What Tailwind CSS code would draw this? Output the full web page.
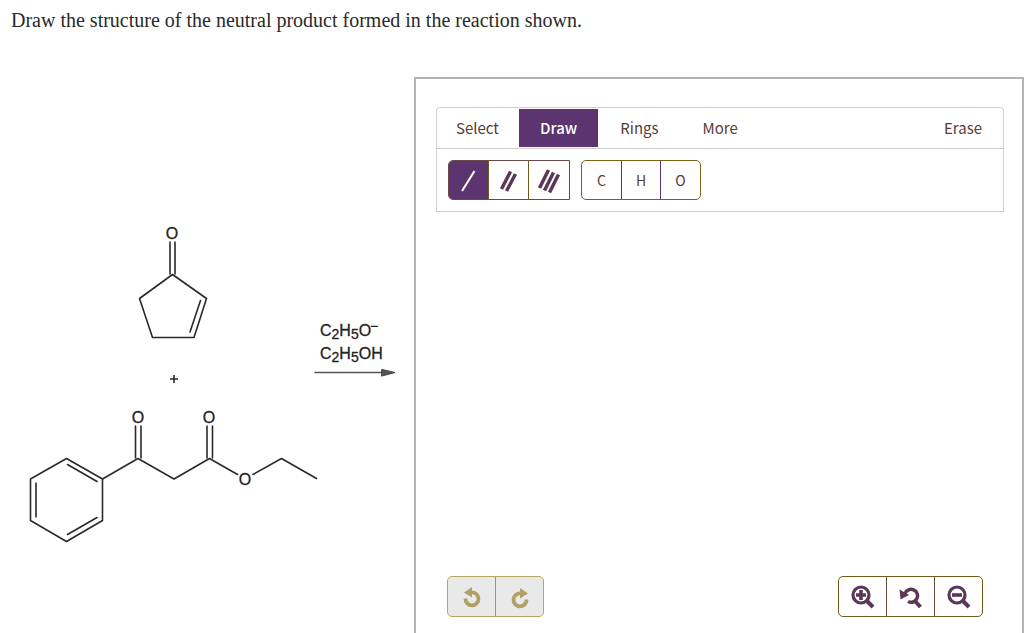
<!DOCTYPE html>
<html lang="en">
<head>
  <meta charset="UTF-8" />
  <meta name="viewport" content="width=device-width, initial-scale=1.0">
  <title>Structure drawing question</title>
  <script src="https://cdn.jsdelivr.net/npm/@tailwindcss/browser@4"></script>
</head>
<body class="flex h-screen flex-col overflow-hidden bg-white font-['Noto_Sans_CJK_SC','Noto_Sans',sans-serif]">
  <h1 class="h-[77px] shrink-0 px-[11px] pt-2 font-['Liberation_Serif',serif] text-[20px] leading-6 text-[#2a2a2a]">Draw the structure of the neutral product formed in the reaction shown.</h1>

  <main class="flex min-h-0 flex-1">
    <!-- Reaction scheme -->
    <figure class="w-[414px] shrink-0 pt-[143px]">
      <svg class="block w-full" viewBox="0 220 414 330" role="img" aria-label="Reaction scheme" fill="none" stroke="#2a2a2a" stroke-width="1.6" stroke-linejoin="round" stroke-linecap="round">
        <!-- cyclopentenone -->
        <path d="M172.500 274.500 206.500 298.500 194 337.500 152.500 337.500 139.500 298.500Z" />
        <path d="M170 242V274M175 242V274M200.500 300.500 190 332" />
        <!-- benzene ring -->
        <path d="M66.500 458.500 102.500 479V520.500L66.500 541.500 30.500 520.500V479Z" />
        <path d="M67.500 464.500 97 481.500M97 517.500 67.500 534.500M36 483V517" />
        <!-- keto ester chain -->
        <path d="M102.500 479 138 458.500 174 479 209.500 458.500 237.500 474.500M253 474.500 281.500 458.500 316.500 478.500" />
        <path d="M135.500 426V458M141 426V458M207 426V458M212.500 426V458" />
        <!-- arrow -->
        <path d="M315 372.500H382" stroke="#555" />
        <path d="M382 369.500 395 372.500 382 376Z" fill="#555" stroke="#444" stroke-width="1" />
        <path d="M170 379H178M174 375V383" stroke-linecap="butt" />
        <g fill="#222" stroke="#222" stroke-width="0.3" font-family="Liberation Sans, sans-serif" font-size="16">
          <text x="172" y="239" text-anchor="middle">O</text>
          <text x="138" y="423" text-anchor="middle">O</text>
          <text x="209" y="423" text-anchor="middle">O</text>
          <text x="245" y="485" text-anchor="middle">O</text>
          <text x="320" y="336">C<tspan font-size="14" dy="3">2</tspan><tspan dy="-3">H</tspan><tspan font-size="14" dy="3">5</tspan><tspan dy="-3">O</tspan></text>
          <text x="320" y="359">C<tspan font-size="14" dy="3">2</tspan><tspan dy="-3">H</tspan><tspan font-size="14" dy="3">5</tspan><tspan dy="-3">OH</tspan></text>
          <text x="370" y="331" font-size="14">−</text>
        </g>
      </svg>
    </figure>

    <!-- Editor -->
    <section class="flex min-w-0 flex-1 flex-col border-2 border-b-0 border-[#b3b3b3] pt-7 pr-[18px] pb-4 pl-5">
      <div class="rounded-t-sm border border-[#cfcfcf] text-[#5a3a35]">
        <nav class="flex h-[41px] items-stretch border-b border-[#cfcfcf] py-px text-[15px]">
          <button class="pr-5 pl-[19px]">Select</button>
          <button class="bg-[#5b3470] px-[21px] font-medium text-white">Draw</button>
          <button class="px-[22px]">Rings</button>
          <button class="px-[22px]">More</button>
          <button class="ml-auto px-[21px]">Erase</button>
        </nav>
        <div class="flex gap-[11px] px-[11px] py-[11px]">
          <div class="flex h-10 divide-x divide-[#6f5a20] overflow-hidden rounded-l-[5px] border border-[#6a4a45]">
            <button aria-label="Single bond" class="flex w-10 items-center justify-center bg-[#5b3470]">
              <svg class="size-6" viewBox="0 0 24 24" stroke="#fff" stroke-width="2"><path d="M5 23 17.500 3" /></svg>
            </button>
            <button aria-label="Double bond" class="flex w-10 items-center justify-center">
              <svg class="size-6" viewBox="0 0 24 24" stroke="#5b3858" stroke-width="3.500"><path d="M4.500 21 13.500 3.500M9.500 23 18.500 6" /></svg>
            </button>
            <button aria-label="Triple bond" class="flex w-10 items-center justify-center">
              <svg class="size-6 overflow-visible" viewBox="0 0 24 24" stroke="#5b3858" stroke-width="3.500"><path d="M2.500 20 11.500 2M7.500 22.500 16.500 4.500M12.500 24.500 21.500 6.500" /></svg>
            </button>
          </div>
          <div class="flex h-10 divide-x divide-[#5b3470] rounded-[5px] border border-[#78631b] text-[14px]">
            <button class="w-10">C</button>
            <button class="w-[39px]">H</button>
            <button class="w-[39px]">O</button>
          </div>
        </div>
      </div>

      <div class="mt-auto flex justify-between pr-[21px] pl-[11px]">
        <div class="flex h-[41px] divide-x divide-[#a8954a] rounded-[5px] border border-[#b5a662] bg-[#e9e9e9]">
          <button aria-label="Undo" class="flex w-12 items-center justify-center">
            <svg class="size-6" viewBox="0 0 24 24" fill="none"><path d="M5.500 13.500A6.500 6.500 0 1 0 11 7.500" stroke="#b0a266" stroke-width="3.800" /><path d="M12 2V12.500L4 7.500Z" fill="#b0a266" /></svg>
          </button>
          <button aria-label="Redo" class="flex w-[47px] items-center justify-center">
            <svg class="size-6" viewBox="0 0 24 24" fill="none"><path d="M18.500 14.500A6.500 6.500 0 1 1 13 8.500" stroke="#b0a266" stroke-width="3.800" /><path d="M12 3V13.500L20 8.500Z" fill="#b0a266" /></svg>
          </button>
        </div>
        <div class="flex h-[41px] divide-x divide-[#6a4a35] rounded-[5px] border border-[#6f5a20]">
          <button aria-label="Zoom in" class="flex w-12 items-center justify-center">
            <svg class="size-6" viewBox="0 0 24 24" fill="none" stroke="#5b3858"><circle cx="10" cy="10" r="8" stroke-width="3.200" /><path d="M16 16 22 22" stroke-width="4" /><path d="M5 10H15M10 5V15" stroke-width="3.600" /></svg>
          </button>
          <button aria-label="Reset zoom" class="flex w-12 items-center justify-center">
            <svg class="size-6" viewBox="0 0 24 24" fill="none" stroke="#5b3858"><path d="M6 8.500A6.500 6.500 0 1 1 9 16.500" stroke-width="3.500" /><path d="M15.500 15.500 21.500 22" stroke-width="4" /><path d="M0.500 4.500 1.500 14.500 10 10Z" fill="#5b3858" stroke="none" /></svg>
          </button>
          <button aria-label="Zoom out" class="flex w-[47px] items-center justify-center">
            <svg class="size-6" viewBox="0 0 24 24" fill="none" stroke="#5b3858"><circle cx="10" cy="10" r="8" stroke-width="3.200" /><path d="M16 16 22 22" stroke-width="4" /><path d="M5 10H15" stroke-width="3.600" /></svg>
          </button>
        </div>
      </div>
    </section>
  </main>
</body>
</html>
